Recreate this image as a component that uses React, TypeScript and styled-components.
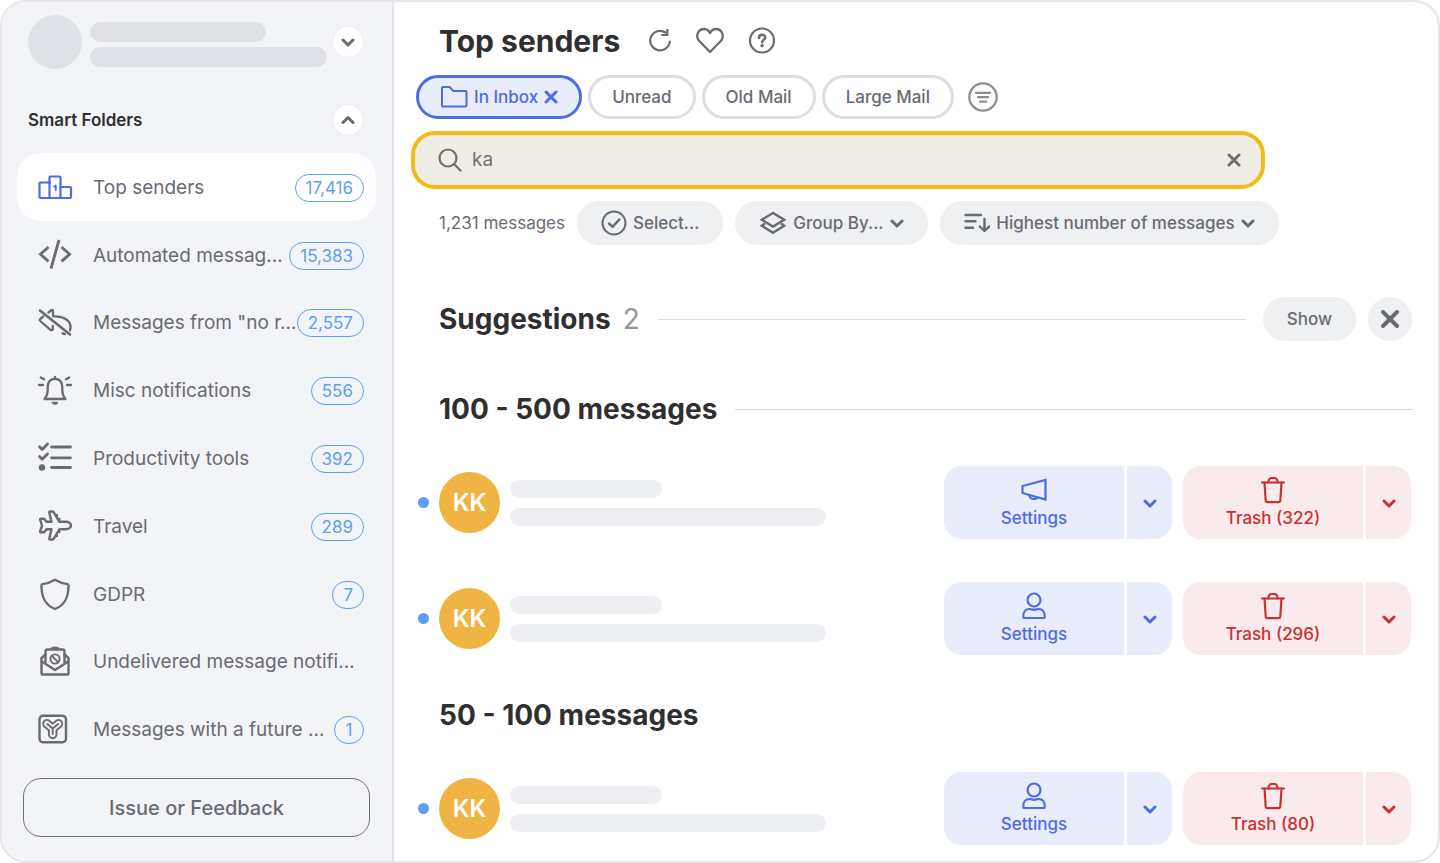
import React, { ReactNode, useState } from "react";
import styled, { createGlobalStyle, css } from "styled-components";

const GlobalStyle = createGlobalStyle`
  *, *::before, *::after { box-sizing: border-box; }
  body {
    margin: 0;
    background: #fff;
    font-family: Inter, "Liberation Sans", sans-serif;
    color: #6a6a72;
  }
  button, input, select { font: inherit; color: inherit; }
  button { cursor: pointer; }
  svg { display: block; flex: none; }
`;

/* ---------- Shell ---------- */

const Frame = styled.div`
  display: flex;
  min-height: 100vh;
  border: 2px solid #e6e6e8;
  border-radius: 26px;
  overflow: hidden;
  background: #fff;
`;

const Sidebar = styled.aside`
  display: flex;
  flex-direction: column;
  flex: none;
  width: 392px;
  padding: 13px 16px 24px 15px;
  background: #f3f4f7;
  border-right: 2px solid #e2e3e6;
`;

const Main = styled.main`
  flex: 1;
  min-width: 0;
  padding: 17px 26px 15px 45px;
`;

/* ---------- Sidebar ---------- */

const Profile = styled.div`
  display: flex;
  align-items: center;
  height: 54px;
  padding: 0 13px 0 11px;
`;

const ProfilePhoto = styled.div`
  flex: none;
  width: 54px;
  height: 54px;
  border-radius: 50%;
  background: #e0e1e6;
`;

const ProfileLines = styled.div`
  display: flex;
  flex-direction: column;
  gap: 5px;
  flex: 1;
  margin: 4px 0 0 8px;
`;

const Placeholder = styled.div<{ $width: number; $tall?: boolean }>`
  width: ${(p) => p.$width}px;
  max-width: 100%;
  height: ${(p) => (p.$tall ? 20 : 18)}px;
  border-radius: 10px;
  background: ${(p) => (p.$tall ? "#e0e1e6" : "#eeeff2")};
`;

const RoundButton = styled.button`
  display: flex;
  align-items: center;
  justify-content: center;
  flex: none;
  width: 30px;
  height: 30px;
  padding: 0;
  border: 0;
  border-radius: 50%;
  background: #fff;
  box-shadow: 0 0 2px rgba(0, 0, 0, 0.08);
`;

const FoldersHeader = styled.div`
  display: flex;
  align-items: center;
  justify-content: space-between;
  margin: 36px 0 18px;
  padding: 0 13px 0 11px;
`;

const FoldersTitle = styled.h2`
  margin: 0;
  font-size: 17px;
  line-height: 24px;
  font-weight: 600;
  color: #2f2f33;
`;

const FolderList = styled.nav`
  display: flex;
  flex-direction: column;
  flex: 1;
  margin-bottom: 15px;
`;

const Folder = styled.a<{ $active?: boolean }>`
  display: flex;
  align-items: center;
  flex: 1;
  min-height: 60px;
  padding: 2px 12px 0 20px;
  border-radius: 24px;
  text-decoration: none;
  color: #6a6a72;
  ${(p) =>
    p.$active &&
    css`
      background: #fff;
      svg { color: #4c6be6; }
    `}
`;

const FolderName = styled.span`
  flex: 1;
  margin-left: 20px;
  font-size: 19px;
  line-height: 24px;
  white-space: nowrap;
`;

const Count = styled.span`
  flex: none;
  min-width: 30px;
  height: 28px;
  padding: 0 10px;
  border: 1px solid #5e9ff0;
  border-radius: 14px;
  font-size: 17px;
  line-height: 26px;
  text-align: center;
  color: #5e9ff0;
`;

const FeedbackButton = styled.button`
  height: 59px;
  margin: 0 6px;
  border: 1px solid #6f6f76;
  border-radius: 18px;
  background: transparent;
  font-size: 20px;
  font-weight: 500;
`;

/* ---------- Main header ---------- */

const TitleRow = styled.header`
  display: flex;
  align-items: center;
  height: 44px;
`;

const Title = styled.h1`
  margin: 0 28px 0 0;
  font-size: 30px;
  line-height: 40px;
  font-weight: 700;
  color: #2f2f31;
`;

const PlainButton = styled.button`
  display: flex;
  align-items: center;
  justify-content: center;
  padding: 0;
  border: 0;
  background: transparent;
`;

const TitleActions = styled.div`
  display: flex;
  align-items: center;
  gap: 24px;
`;

const FilterRow = styled.div`
  display: flex;
  align-items: center;
  gap: 6px;
  margin: 12px 0 12px -23px;
`;

const FilterButton = styled.button<{ $active?: boolean }>`
  display: flex;
  align-items: center;
  gap: 6px;
  height: 44px;
  padding: 0 21px;
  border: 3px solid ${(p) => (p.$active ? "#4c6be6" : "#dedee0")};
  border-radius: 22px;
  background: ${(p) => (p.$active ? "#e9ecfa" : "#fff")};
  color: ${(p) => (p.$active ? "#4c6be6" : "inherit")};
  font-size: 17px;
  font-weight: 500;
  white-space: nowrap;
`;

const MoreFilters = styled(PlainButton)`
  margin-left: 8px;
  color: #8e8e94;
`;

const SearchBox = styled.form`
  display: flex;
  align-items: center;
  gap: 10px;
  max-width: 854px;
  height: 58px;
  margin-left: -28px;
  padding: 0 20px 0 23px;
  border: 4px solid #f3bb17;
  border-radius: 24px;
  background: #f0ede6;
  color: #726f6b;
`;

const SearchInput = styled.input`
  flex: 1;
  min-width: 0;
  padding: 0;
  border: 0;
  outline: 0;
  background: transparent;
  font-size: 19px;
  line-height: 24px;
`;

const Toolbar = styled.div`
  display: flex;
  align-items: center;
  gap: 12px;
  margin-top: 12px;
`;

const Total = styled.span`
  font-size: 17px;
  white-space: nowrap;
`;

const pill = css`
  display: flex;
  align-items: center;
  gap: 6px;
  height: 44px;
  padding: 0 24px;
  border: 0;
  border-radius: 22px;
  background: #eff0f2;
  font-size: 17px;
  font-weight: 500;
  white-space: nowrap;
`;

const PillButton = styled.button`
  ${pill}
`;

const PillSelect = styled.label`
  ${pill}
  cursor: pointer;

  select {
    appearance: none;
    padding: 0;
    border: 0;
    outline: 0;
    background: transparent;
    cursor: pointer;
  }
`;

const CloseButton = styled(PlainButton)`
  flex: none;
  width: 44px;
  height: 44px;
  border-radius: 50%;
  background: #eff0f2;
`;

/* ---------- Groups ---------- */

const GroupHeader = styled.div`
  display: flex;
  align-items: center;
  height: 44px;
`;

const Suggestions = styled.section`
  margin: 52px 0 46px;
`;

const SuggestionActions = styled.div`
  display: flex;
  gap: 12px;
  margin-left: 17px;
`;

const GroupTitle = styled.h2`
  margin: 0;
  font-size: 28px;
  line-height: 36px;
  font-weight: 700;
  color: #2f2f31;
  white-space: nowrap;
`;

const GroupCount = styled.span`
  margin-left: 12px;
  font-size: 28px;
  line-height: 36px;
  color: #96969a;
`;

const Rule = styled.div`
  flex: 1;
  height: 1px;
  margin-left: 18px;
  background: #d9dadc;
`;

const Groups = styled.div`
  display: flex;
  flex-direction: column;
  gap: 38px;
`;

const SenderList = styled.ul`
  display: flex;
  flex-direction: column;
  gap: 43px;
  margin: 35px 0 0 -21px;
  padding: 0;
  list-style: none;
`;

const SenderRow = styled.li`
  display: flex;
  align-items: center;
  height: 73px;
`;

const UnreadDot = styled.span`
  flex: none;
  width: 11px;
  height: 11px;
  border-radius: 50%;
  background: #5e9ff5;
`;

const Avatar = styled.div`
  display: flex;
  align-items: center;
  justify-content: center;
  flex: none;
  width: 61px;
  height: 61px;
  margin: 0 10px;
  border-radius: 50%;
  background: #efb443;
  color: #fff;
  font-size: 24px;
  font-weight: 600;
`;

const SenderLines = styled.div`
  display: flex;
  flex-direction: column;
  gap: 10px;
  flex: 1;
  min-width: 0;
`;

const SenderActions = styled.div`
  display: flex;
  gap: 11px;
  padding-right: 1px;
`;

const tones = {
  blue: { ink: "#4c6be6", fill: "#e9ecfa" },
  red: { ink: "#cc2f33", fill: "#f9eaec" },
};
type Tone = keyof typeof tones;

const Split = styled.div<{ $tone: Tone }>`
  display: flex;
  gap: 3px;
  height: 73px;
  border-radius: 18px;
  overflow: hidden;

  button {
    display: flex;
    flex-direction: column;
    align-items: center;
    justify-content: center;
    padding: 0;
    border: 0;
    background: ${(p) => tones[p.$tone].fill};
    color: ${(p) => tones[p.$tone].ink};
  }
`;

const SplitMain = styled.button`
  gap: 3px;
  width: 180px;
  font-size: 17px;
  line-height: 22px;
  font-weight: 500;
`;

const SplitMenu = styled.button`
  width: 45px;
`;

/* ---------- Icons ---------- */

type IconProps = { w: number; h?: number; sw?: number; children: ReactNode };

const Icon = ({ w, h = w, sw = 2, children }: IconProps) => (
  <svg
    width={w}
    height={h}
    viewBox={`0 0 ${w} ${h}`}
    fill="none"
    stroke="currentColor"
    strokeWidth={sw}
    strokeLinecap="round"
    strokeLinejoin="round"
    aria-hidden="true"
  >
    {children}
  </svg>
);

const ChevronDown = () => (
  <Icon w={14} sw={3}>
    <path d="M2 5l5 5 5-5" />
  </Icon>
);
const ChevronUp = () => (
  <Icon w={14} sw={3}>
    <path d="M2 9.500l5-5 5 5" />
  </Icon>
);
const Cross = ({ size = 14, sw = 3 }: { size?: number; sw?: number }) => (
  <Icon w={size} sw={sw}>
    <path d={`M2 2L${size - 2} ${size - 2}M${size - 2} 2L2 ${size - 2}`} />
  </Icon>
);

const PodiumIcon = () => (
  <Icon w={36} sw={2.2}>
    <path d="M13 12.500H3.500a1 1 0 0 0-1 1V27a1 1 0 0 0 1 1H33a1 1 0 0 0 1-1v-9a1 1 0 0 0-1-1h-9.500" />
    <path d="M12.500 28V7.500a1 1 0 0 1 1-1h9a1 1 0 0 1 1 1V28" />
    <path d="M17.200 16.500l1.500-1v4.500" strokeWidth="1.900" />
  </Icon>
);
const CodeIcon = () => (
  <Icon w={36} sw={2.8}>
    <g strokeLinecap="butt" strokeLinejoin="miter">
      <path d="M11.500 9L3.400 16.200l8.100 7.200M24.500 9l8.100 7.200-8.100 7.200M22 2L14 30.500" />
    </g>
  </Icon>
);
const NoReplyIcon = () => (
  <Icon w={36} sw={2.3}>
    <path d="M3 5.500l30 24" strokeWidth="2.700" />
    <path d="M11.500 7.500l3-2.500Q16 4.400 16 6.500V11q1 .6 4 .7C28 12 33.500 16 33.500 22q0 2-.5 3.500" />
    <path d="M6.200 11.500L3.200 14Q2.200 15 3.200 16l10.300 8.800q2 1.200 2.300-.8v-3" />
    <path d="M25.500 28.300q1.300.9 2.500.9" />
  </Icon>
);
const BellIcon = () => (
  <Icon w={36} sw={2.3}>
    <path d="M7.500 26q3-3.500 3.200-8.500V14C10.900 8.500 14 5.800 18 5.800S25.100 8.500 25.300 14v3.500q.2 5 3.200 8.500z" />
    <path d="M18 4v1.500M3.800 4.500L7 6.300M2 12h4M32.200 4.500L29 6.300M34 12h-4" />
    <path d="M15.200 29.300h5.600a2.800 2 0 0 1-5.600 0z" fill="currentColor" strokeWidth="1" />
  </Icon>
);
const ChecklistIcon = () => (
  <Icon w={36} sw={2.8}>
    <path d="M14.500 6H33.500M14.500 16.800H33.500M14.500 26.500H33.500" />
    <path d="M2.500 5.800l2.700 2.700 5.300-5.400M2.500 15.600l2.700 2.700 5.300-5.400" />
    <circle cx="5" cy="26.500" r="3.200" fill="currentColor" stroke="none" />
  </Icon>
);
const PlaneIcon = () => (
  <Icon w={36} sw={2.4}>
    <path d="M22.500 12.800L16.700 3.200Q16.200 2.500 15 2.500H13.200Q12 2.500 12.300 3.700L14.500 12.800H9.500L7.200 9.700H4Q2.800 9.700 3.200 10.900L5 16.500 3.200 22.100Q2.800 23.300 4 23.300H7.200L9.500 20.200H14.500L12.300 29.300Q12 30.500 13.200 30.500H15Q16.200 30.500 16.700 29.800L22.500 20.200H28.500C32 20.200 34 18.300 34 16.500S32 12.800 28.500 12.800z" />
    <path d="M19.800 6v1.800M22.300 10v.6M19.800 27v-1.800M22.300 23v-.6" strokeWidth="2.400" />
  </Icon>
);
const ShieldIcon = () => (
  <Icon w={36} sw={2.4}>
    <path d="M18 2.800Q24 6.500 30.500 7.100Q31.500 7.300 31.500 8.500C31.500 20.500 28 28 18 32 8 28 4.500 20.500 4.500 8.500Q4.500 7.300 5.500 7.100 12 6.500 18 2.800z" />
  </Icon>
);
const UndeliveredIcon = () => (
  <Icon w={36} sw={2.4}>
    <path d="M8.500 18V7.500a2 2 0 0 1 2-2h15a2 2 0 0 1 2 2V18" />
    <path d="M14.500 4.800q3.500-2.400 7 0z" fill="currentColor" />
    <path d="M8.500 10.500L4.500 14v15.500a1 1 0 0 0 1 1h25a1 1 0 0 0 1-1V14l-4-3.500" />
    <path d="M4.800 17.500L18 26l13.200-8.500" />
    <circle cx="18" cy="15" r="4.600" strokeWidth="1.900" />
    <path d="M15.200 12.200l5.600 5.600" strokeWidth="1.900" />
  </Icon>
);
const FutureDateIcon = () => (
  <Icon w={36} sw={2.4}>
    <rect x="2.500" y="3.800" width="26.500" height="26.500" rx="3.500" />
    <path d="M10 11.800l5.700 4.700 5.700-4.700M15.700 16.500v6" strokeWidth="9.500" />
    <path d="M10 11.800l5.700 4.700 5.700-4.700M15.700 16.500v6" stroke="#f3f4f7" strokeWidth="5.600" />
    <path d="M10.300 12l5.400 4.500 5.400-4.500M15.700 16.500v5.500" strokeWidth="1.900" />
  </Icon>
);

const RefreshIcon = () => (
  <Icon w={24} sw={2.2}>
    <path d="M21.800 12.500A9.800 9.800 0 1 1 17.500 3.500" />
    <path d="M19.300 0v6h-6" strokeLinecap="butt" strokeLinejoin="miter" />
  </Icon>
);
const HeartIcon = () => (
  <Icon w={28} sw={2.3}>
    <path d="M14 25L3 13.800C-.6 9.800 1.600 2 8 2c3 0 4.700 1.600 6 4 1.300-2.400 3-4 6-4 6.400 0 8.600 7.800 5 11.800z" />
  </Icon>
);
const HelpIcon = () => (
  <Icon w={28} sw={2.2}>
    <circle cx="14" cy="13.500" r="12" />
    <path d="M11 11c0-4.300 6.300-4 6.300-.4 0 2.200-3.200 2.300-3.200 4.600" strokeWidth="2.500" />
    <circle cx="14.100" cy="18.800" r="1.700" fill="currentColor" stroke="none" />
  </Icon>
);
const FolderIcon = () => (
  <Icon w={28} h={24}>
    <path d="M2 20.500V3a1 1 0 0 1 1-1h6.500l4 4H25.500a1 1 0 0 1 1 1V20.500a1 1 0 0 1-1 1H3a1 1 0 0 1-1-1z" />
  </Icon>
);
const FilterIcon = () => (
  <Icon w={30} sw={2.3}>
    <circle cx="15" cy="15" r="13.700" />
    <path d="M8 10.800h14M10 15.200h10M12 19.700h6" />
  </Icon>
);
const SearchIcon = () => (
  <Icon w={24} sw={2.2}>
    <circle cx="10" cy="10" r="8.500" />
    <path d="M16.300 16.300L22.500 22.500" />
  </Icon>
);
const CheckCircleIcon = () => (
  <Icon w={26} sw={2}>
    <circle cx="13" cy="13" r="11.500" />
    <path d="M8 13.500l3.500 3.300L18.300 9.500" strokeWidth="2.500" />
  </Icon>
);
const LayersIcon = () => (
  <Icon w={28} h={26} sw={2.4}>
    <g strokeLinecap="butt" strokeLinejoin="miter">
      <path d="M14 3L2.800 9.800 14 16.500 25.200 9.800z" />
      <path d="M6 13.500L2.800 15.800 14 22.800l11.200-7L22 13.500" />
    </g>
  </Icon>
);
const SortIcon = () => (
  <Icon w={26} h={22} sw={2.4}>
    <path d="M1.500 3H17M1.500 9.300H11.500M1.500 15.700H9" />
    <path d="M20.500 7v11.500M15.800 14.500l4.700 4.500 4.700-4.500" />
  </Icon>
);
const MegaphoneIcon = () => (
  <Icon w={28} sw={2.2}>
    <path d="M25.500 4v19.500L2.500 17V10z" strokeLinejoin="miter" />
    <path d="M9.500 19.500c0 2 1.700 3.500 4 3.500s3.500-1 3.700-2" />
  </Icon>
);
const PersonIcon = () => (
  <Icon w={28} sw={2.2}>
    <circle cx="14" cy="8" r="6.500" />
    <path d="M3.300 24.500c0-5 2.500-7.500 6-7.500 1.800 0 2.800.8 4.700.8s2.900-.8 4.700-.8c3.500 0 6 2.500 6 7.500q0 1.500-1.500 1.500H4.800q-1.500 0-1.500-1.500z" />
  </Icon>
);
const TrashIcon = () => (
  <Icon w={28} sw={2.2}>
    <path d="M3 6.500H25" />
    <path d="M9.300 6.300q.7-4.300 3-4.300h3.400q2.300 0 3 4.300" />
    <path d="M5.500 6.500l1.200 18q.1 1.700 1.700 1.700h11.200q1.600 0 1.700-1.700l1.200-18" />
  </Icon>
);

/* ---------- Data ---------- */

const folders: { name: string; icon: ReactNode; count?: string }[] = [
  { name: "Top senders", icon: <PodiumIcon />, count: "17,416" },
  { name: "Automated messag…", icon: <CodeIcon />, count: "15,383" },
  { name: "Messages from \"no r…", icon: <NoReplyIcon />, count: "2,557" },
  { name: "Misc notifications", icon: <BellIcon />, count: "556" },
  { name: "Productivity tools", icon: <ChecklistIcon />, count: "392" },
  { name: "Travel", icon: <PlaneIcon />, count: "289" },
  { name: "GDPR", icon: <ShieldIcon />, count: "7" },
  { name: "Undelivered message notifi…", icon: <UndeliveredIcon /> },
  { name: "Messages with a future …", icon: <FutureDateIcon />, count: "1" },
];

type Sender = { initials: string; trash: number; icon: ReactNode };

const groups: { title: string; ruled: boolean; senders: Sender[] }[] = [
  {
    title: "100 - 500 messages",
    ruled: true,
    senders: [
      { initials: "KK", trash: 322, icon: <MegaphoneIcon /> },
      { initials: "KK", trash: 296, icon: <PersonIcon /> },
    ],
  },
  {
    title: "50 - 100 messages",
    ruled: false,
    senders: [{ initials: "KK", trash: 80, icon: <PersonIcon /> }],
  },
];

/* ---------- Parts ---------- */

const SplitButton = ({ tone, icon, label }: { tone: Tone; icon: ReactNode; label: string }) => (
  <Split $tone={tone}>
    <SplitMain type="button">
      {icon}
      {label}
    </SplitMain>
    <SplitMenu type="button" aria-label={`More options for ${label}`}>
      <ChevronDown />
    </SplitMenu>
  </Split>
);

export default function App() {
  const [query, setQuery] = useState("ka");

  return (
    <>
      <GlobalStyle />
      <Frame>
        <Sidebar>
          <Profile>
            <ProfilePhoto />
            <ProfileLines>
              <Placeholder $width={176} $tall />
              <Placeholder $width={237} $tall />
            </ProfileLines>
            <RoundButton type="button" aria-label="Switch account">
              <ChevronDown />
            </RoundButton>
          </Profile>

          <FoldersHeader>
            <FoldersTitle>Smart Folders</FoldersTitle>
            <RoundButton type="button" aria-label="Collapse smart folders">
              <ChevronUp />
            </RoundButton>
          </FoldersHeader>

          <FolderList aria-label="Smart folders">
            {folders.map((f, i) => (
              <Folder key={f.name} href="#" $active={i === 0}>
                {f.icon}
                <FolderName>{f.name}</FolderName>
                {f.count && <Count>{f.count}</Count>}
              </Folder>
            ))}
          </FolderList>

          <FeedbackButton type="button">Issue or Feedback</FeedbackButton>
        </Sidebar>

        <Main>
          <TitleRow>
            <Title>Top senders</Title>
            <TitleActions>
              <PlainButton type="button" aria-label="Refresh">
                <RefreshIcon />
              </PlainButton>
              <PlainButton type="button" aria-label="Add to favorites">
                <HeartIcon />
              </PlainButton>
              <PlainButton type="button" aria-label="Help">
                <HelpIcon />
              </PlainButton>
            </TitleActions>
          </TitleRow>

          <FilterRow>
            <FilterButton type="button" $active>
              <FolderIcon />
              In Inbox
              <Cross />
            </FilterButton>
            <FilterButton type="button">Unread</FilterButton>
            <FilterButton type="button">Old Mail</FilterButton>
            <FilterButton type="button">Large Mail</FilterButton>
            <MoreFilters type="button" aria-label="More filters">
              <FilterIcon />
            </MoreFilters>
          </FilterRow>

          <SearchBox onSubmit={(e) => e.preventDefault()}>
            <SearchIcon />
            <SearchInput
              type="text"
              aria-label="Search senders"
              value={query}
              onChange={(e) => setQuery(e.target.value)}
            />
            <PlainButton type="button" aria-label="Clear search" onClick={() => setQuery("")}>
              <Cross />
            </PlainButton>
          </SearchBox>

          <Toolbar>
            <Total>1,231 messages</Total>
            <PillButton type="button">
              <CheckCircleIcon />
              Select...
            </PillButton>
            <PillSelect>
              <LayersIcon />
              <select aria-label="Group by">
                <option>Group By...</option>
              </select>
              <ChevronDown />
            </PillSelect>
            <PillSelect>
              <SortIcon />
              <select aria-label="Sort order">
                <option>Highest number of messages</option>
              </select>
              <ChevronDown />
            </PillSelect>
          </Toolbar>

          <Suggestions>
            <GroupHeader>
              <GroupTitle>Suggestions</GroupTitle>
              <GroupCount>2</GroupCount>
              <Rule />
              <SuggestionActions>
                <PillButton type="button">Show</PillButton>
                <CloseButton type="button" aria-label="Dismiss suggestions">
                  <Cross size={18} sw={4} />
                </CloseButton>
              </SuggestionActions>
            </GroupHeader>
          </Suggestions>

          <Groups>
            {groups.map((g) => (
              <section key={g.title}>
                <GroupHeader>
                  <GroupTitle>{g.title}</GroupTitle>
                  {g.ruled && <Rule />}
                </GroupHeader>
                <SenderList>
                  {g.senders.map((s) => (
                    <SenderRow key={s.trash}>
                      <UnreadDot />
                      <Avatar>{s.initials}</Avatar>
                      <SenderLines>
                        <Placeholder $width={152} />
                        <Placeholder $width={316} />
                      </SenderLines>
                      <SenderActions>
                        <SplitButton tone="blue" icon={s.icon} label="Settings" />
                        <SplitButton tone="red" icon={<TrashIcon />} label={`Trash (${s.trash})`} />
                      </SenderActions>
                    </SenderRow>
                  ))}
                </SenderList>
              </section>
            ))}
          </Groups>
        </Main>
      </Frame>
    </>
  );
}
